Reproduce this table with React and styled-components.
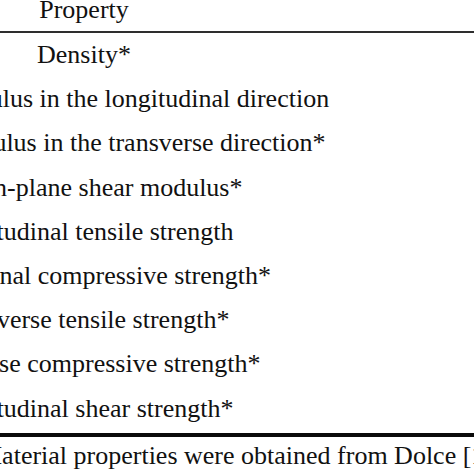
import React from 'react';
import styled, { createGlobalStyle } from 'styled-components';

const GlobalStyle = createGlobalStyle`
  html, body {
    margin: 0;
    padding: 0;
    background: #ffffff;
  }
`;

const Page = styled.div`
  width: 474px;
  height: 474px;
  overflow: hidden;
  background: #ffffff;
  color: #111111;
  font-family: "Liberation Serif", "Times New Roman", serif;
  font-size: 26px;
`;

const Table = styled.div`
  width: 1000px;
  margin-left: -216px;
`;

const HeaderRow = styled.div`
  display: flex;
  height: 20px;
  padding-bottom: 11px;
  line-height: 20px;
  border-bottom: 2px solid #2e2e2e;
`;

const Body = styled.div`
  padding-bottom: 2px;
  border-bottom: 4px solid #0a0a0a;
`;

const Row = styled.div`
  display: flex;
  height: 44.2px;
  line-height: 44.2px;
`;

const Cell = styled.div`
  width: 600px;
  text-align: center;
  white-space: nowrap;
`;

const Footnote = styled.div`
  line-height: 38.4px;
  white-space: nowrap;
  text-indent: -21px;
`;

const properties = [
  'Density*',
  'Elasticity modulus in the longitudinal direction',
  'Elasticity modulus in the transverse direction*',
  'Main in-plane shear modulus*',
  'Longitudinal tensile strength',
  'Longitudinal compressive strength*',
  'Transverse tensile strength*',
  'Transverse compressive strength*',
  'Longitudinal shear strength*',
];

export default function App() {
  return (
    <Page>
      <GlobalStyle />
      <Table>
        <HeaderRow>
          <Cell>Property</Cell>
        </HeaderRow>
        <Body>
          {properties.map(p => (
            <Row key={p}>
              <Cell>{p}</Cell>
            </Row>
          ))}
        </Body>
      </Table>
      <Footnote>Material properties were obtained from Dolce [12]</Footnote>
    </Page>
  );
}
